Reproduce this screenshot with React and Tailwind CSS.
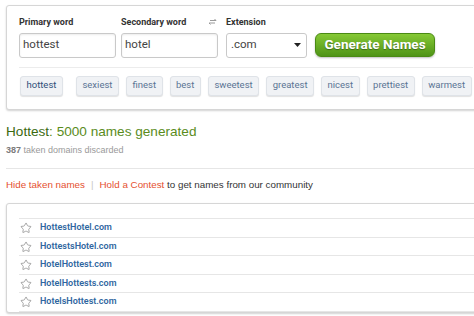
import { Star } from 'lucide-react';

const tags = ['hottest', 'sexiest', 'finest', 'best', 'sweetest', 'greatest', 'nicest', 'prettiest', 'warmest'];
const names = ['HottestHotel.com', 'HottestsHotel.com', 'HotelHottest.com', 'HotelHottests.com', 'HotelsHottest.com'];

function Field({ label, value }) {
  return (
    <div className="flex flex-col">
      <span className="text-[9px] font-bold leading-none text-[#333]">{label}</span>
      <div className="mt-[5.5px] flex h-[25px] w-[97px] items-center rounded-[3px] border border-[#c9c9c9] bg-white px-[3px] text-[11.5px] text-[#444] shadow-[inset_0_1px_2px_rgba(0,0,0,0.08)]">
        {value}
      </div>
    </div>
  );
}

export default function App() {
  return (
    <div className="h-[316px] w-[474px] overflow-hidden bg-white pl-[6px] pt-[5px] font-['Roboto',sans-serif]">
      <section className="w-[480px] rounded-[3px] border border-[#d6d6d6] bg-white shadow-[0_1px_2px_rgba(0,0,0,0.18)]">
        <div className="flex items-end gap-[5px] px-[12px] pt-[12px]">
          <Field label="Primary word" value="hottest" />
          <div className="relative">
            <Field label="Secondary word" value="hotel" />
            <svg className="absolute left-[87px] top-[0px]" width="9" height="7" viewBox="0 0 9 7" fill="none" stroke="#9a9a9a" strokeWidth="1">
              <path d="M2 2.5h6M6.5 1l1.5 1.5" />
              <path d="M7 5H1M2.5 6.5L1 5" />
            </svg>
          </div>
          <div className="ml-[3px] flex flex-col">
            <span className="text-[9px] font-bold leading-none text-[#333]">Extension</span>
            <div className="mt-[5.5px] flex h-[25px] w-[81px] items-center justify-between rounded-[3px] border border-[#c9c9c9] bg-white px-[4px] text-[11.5px] text-[#444]">
              .com
              <svg width="7" height="4" viewBox="0 0 7 4" className="mr-[1px]">
                <path d="M0 0h7L3.5 4z" fill="#222" />
              </svg>
            </div>
          </div>
          <button className="mb-[1px] ml-[3px] h-[24px] w-[120px] rounded-[6px] border border-[#4a8a14] bg-gradient-to-b from-[#86c935] to-[#4f9416] text-[13.5px] font-bold text-white [text-shadow:0_1px_1px_rgba(0,0,0,0.35)] shadow-[0_1px_2px_rgba(0,0,0,0.25)]">
            Generate Names
          </button>
        </div>
        <div className="mx-[12px] mt-[9px] border-t border-[#ececec]" />
        <div className="flex gap-[7px] px-[13px] pb-[13px] pt-[8px]">
          {tags.map((t, i) => (
            <span
              key={t}
              className={`flex h-[20px] items-center rounded-[3px] border border-[#dfe3e8] bg-[#f0f2f5] px-[5.5px] text-[9.5px] shadow-[0_1px_1px_rgba(0,0,0,0.12)] ${i === 0 ? 'mr-[6px] text-[#2f4f78]' : 'text-[#5a7494]'}`}
            >
              {t}
            </span>
          ))}
        </div>
      </section>

      <div className="mt-[15px] font-['Liberation_Sans',sans-serif]">
        <h2 className="text-[13.6px] leading-none text-[#5a8c1c]">
          <span className="text-[#3b6a10]">Hottest</span>: 5000 names generated
        </h2>
        <p className="mt-[6px] text-[9px] text-[#9a9a9a]">
          <span className="font-bold text-[#7a7a7a]">387</span> taken domains discarded
        </p>
        <div className="mt-[10px] border-t border-[#e6e6e6]" />
        <p className="mt-[9px] text-[9.8px] text-[#333]">
          <span className="font-medium text-[#e5502f]">Hide taken names</span>
          <span className="mx-[6px] text-[#c8c8c8]">|</span>
          <span className="font-medium text-[#e5502f]">Hold a Contest</span> to get names from our community
        </p>
      </div>

      <section className="mt-[11px] w-[480px] rounded-[3px] border border-[#d6d6d6] bg-white pl-[12px] pt-[14px] shadow-[0_1px_2px_rgba(0,0,0,0.18)]">
        <div className="border-t border-[#e6e6e6]">
          {names.map((n) => (
            <div key={n} className="flex h-[18.5px] items-center border-b border-[#e6e6e6] pl-[1px]">
              <Star className="h-[12px] w-[12px] text-[#8a8a8a]" strokeWidth={1.5} />
              <span className="ml-[8px] text-[9px] font-semibold text-[#2f66a0]">{n}</span>
            </div>
          ))}
        </div>
      </section>
    </div>
  );
}
